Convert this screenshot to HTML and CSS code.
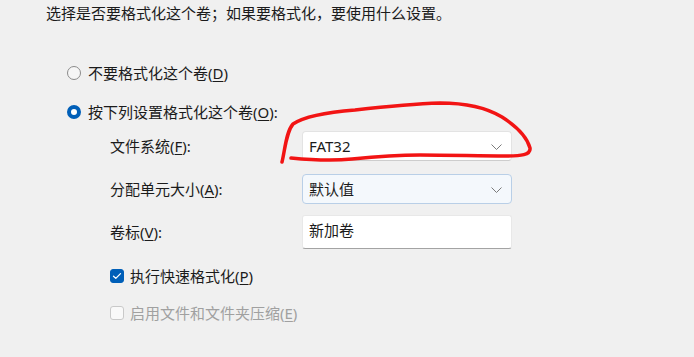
FILE: index.html
```html
<!DOCTYPE html>
<html lang="zh-CN">
<head>
  <meta charset="UTF-8">
  <title>格式化分区</title>
  <link rel="stylesheet" href="styles.css">
</head>
<body>
  <p class="intro">选择是否要格式化这个卷；如果要格式化，要使用什么设置。</p>

  <div class="options">
    <label class="radio-row">
      <span class="radio"></span>
      <span>不要格式化这个卷(<u>D</u>)</span>
    </label>
    <label class="radio-row second">
      <span class="radio checked"></span>
      <span>按下列设置格式化这个卷(<u>O</u>):</span>
    </label>

    <div class="fields">
      <div class="field">
        <span class="field-label">文件系统(<u>F</u>):</span>
        <div class="select">
          <span>FAT32</span>
          <svg class="chevron" width="11" height="6" viewBox="0 0 11 6"><path d="M0.5 0.5 L5.5 5.5 L10.5 0.5" fill="none" stroke="#7a7a7a" stroke-width="1"/></svg>
        </div>
      </div>
      <div class="field row2">
        <span class="field-label">分配单元大小(<u>A</u>):</span>
        <div class="select hover">
          <span>默认值</span>
          <svg class="chevron" width="11" height="6" viewBox="0 0 11 6"><path d="M0.5 0.5 L5.5 5.5 L10.5 0.5" fill="none" stroke="#7a7a7a" stroke-width="1"/></svg>
        </div>
      </div>
      <div class="field row3">
        <span class="field-label">卷标(<u>V</u>):</span>
        <div class="textbox">新加卷</div>
      </div>

      <label class="check-row">
        <span class="check checked">
          <svg width="10" height="8" viewBox="0 0 10 8"><path d="M1.5 4.2 L3.8 6.4 L8.5 1.6" fill="none" stroke="#fff" stroke-width="1.3" stroke-linecap="round" stroke-linejoin="round"/></svg>
        </span>
        <span>执行快速格式化(<u>P</u>)</span>
      </label>
      <label class="check-row disabled">
        <span class="check"></span>
        <span>启用文件和文件夹压缩(<u>E</u>)</span>
      </label>
    </div>
  </div>

  <!-- 手绘红圈标注 -->
  <svg class="scribble" width="694" height="357" viewBox="0 0 694 357">
    <path d="M282,162 C285,150 286,132 293,124 C305,116 330,112 355,110 C382,107 410,104 440,103 C466,103 487,108 502,117 C516,126 527,137 530,148 C531,155 521,156 505,156 C480,156 450,155 420,155 C395,155 372,157 352,159 C332,161 312,160 291,158" fill="none" stroke="#f21414" stroke-width="3.5" stroke-linecap="round" stroke-linejoin="round"/>
  </svg>
</body>
</html>
```

FILE: styles.css
```css
* { margin: 0; padding: 0; box-sizing: border-box; }
html, body { height: 100%; }
body {
  background: #f0f0f0;
  font-family: "Noto Sans", "Noto Sans CJK SC", sans-serif;
  font-size: 15px;
  line-height: 20px;
  color: #1b1b1b;
  position: relative;
  overflow: hidden;
}
u { text-underline-offset: 2px; }

.intro {
  margin: 3px 0 0 46px;
}

.options {
  padding-left: 67px;
  margin-top: 40px;
}

.radio-row {
  display: flex;
  align-items: center;
  height: 20px;
  gap: 7px;
}
.radio-row.second { margin-top: 19px; }
.radio {
  width: 14px;
  height: 14px;
  border-radius: 50%;
  border: 1px solid #8b8b8b;
  background: #f6f6f6;
}
.radio.checked {
  border: 4px solid #005fb8;
  background: #fff;
}

.fields {
  padding-left: 43px;
  margin-top: 9px;
}
.field {
  display: flex;
  align-items: center;
}
.field.row2 { margin-top: 13px; }
.field.row3 { margin-top: 11px; }
.field-label { width: 192px; }

.select {
  width: 210px;
  height: 30px;
  display: flex;
  align-items: center;
  justify-content: space-between;
  padding: 0 9px 0 6px;
  background: #fff;
  border: 1px solid #e3e3e3;
  border-bottom-color: #cdcdcd;
  border-radius: 4px;
}
.select.hover {
  background: #f4f8fc;
  border-color: #b9cfe7;
}
.chevron { margin-top: 1px; }

.textbox {
  width: 210px;
  height: 34px;
  padding: 4px 6px 0;
  background: #fff;
  border: 1px solid #e8e8e8;
  border-bottom-color: #a3a3a3;
  border-radius: 3px;
}

.check-row {
  display: flex;
  align-items: center;
  height: 20px;
  gap: 6px;
  margin-top: 17px;
}
.check {
  width: 14px;
  height: 14px;
  border-radius: 3px;
  border: 1px solid #c9c9c9;
  background: #f9f9f9;
  display: flex;
  align-items: center;
  justify-content: center;
}
.check.checked {
  background: #005fb8;
  border-color: #005fb8;
}
.check-row.disabled { color: #a0a0a0; }

.scribble {
  position: absolute;
  left: 0;
  top: 0;
  pointer-events: none;
}
```
